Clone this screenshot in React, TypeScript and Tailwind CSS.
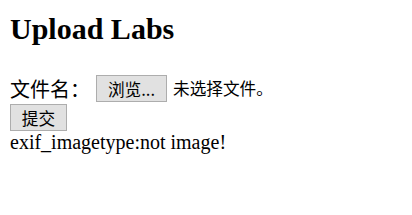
import React from "react";

const serif = { fontFamily: '"Liberation Serif", "Noto Sans CJK SC", serif' } as React.CSSProperties;

export default function App() {
  return (
    <div className="min-h-[215px] w-[412px] bg-white px-[10px] pt-[12px] text-black text-[20px] font-['Liberation_Serif','Noto_Sans_CJK_SC',serif]">
      <h1 className="h-[34px] text-[30px] font-bold leading-[34px]">Upload Labs</h1>
      <form className="mt-[29px]">
        <div className="flex h-[27px] items-center">
          <span className="leading-[27px] font-['Noto_Sans_CJK_SC',sans-serif] text-[20px]">文件名：</span>
          <button
            type="button"
            className="ml-[6px] flex h-[27px] w-[71px] items-center justify-center border border-[#adadad] bg-[#e1e1e1] text-[16.67px] leading-[20px] font-['Noto_Sans_CJK_SC',sans-serif]"
          >
            浏览...
          </button>
          <span className="ml-[6px] text-[16.67px] leading-[27px] font-['Noto_Sans_CJK_SC',sans-serif]">未选择文件。</span>
        </div>
        <div className="mt-[2px] flex h-[27px]">
          <button
            type="submit"
            className="flex h-[27px] w-[57px] items-center justify-center border border-[#adadad] bg-[#e1e1e1] text-[16.67px] leading-[20px] font-['Noto_Sans_CJK_SC',sans-serif]"
          >
            提交
          </button>
        </div>
      </form>
      <div className="leading-[23px]">exif_imagetype:not image!</div>
    </div>
  );
}
